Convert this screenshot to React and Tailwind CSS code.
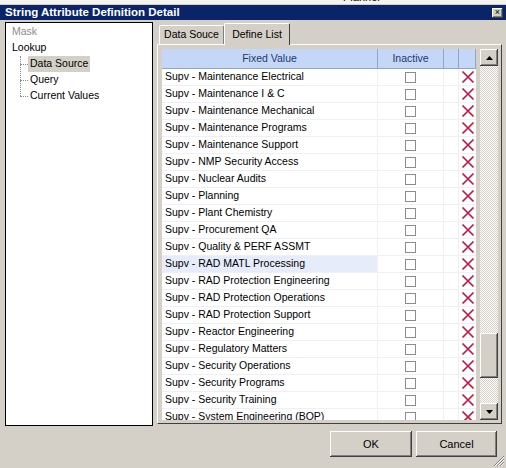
import React from 'react';

const rows = [
  'Supv - Maintenance Electrical',
  'Supv - Maintenance I & C',
  'Supv - Maintenance Mechanical',
  'Supv - Maintenance Programs',
  'Supv - Maintenance Support',
  'Supv - NMP Security Access',
  'Supv - Nuclear Audits',
  'Supv - Planning',
  'Supv - Plant Chemistry',
  'Supv - Procurement QA',
  'Supv - Quality & PERF ASSMT',
  'Supv - RAD MATL Processing',
  'Supv - RAD Protection Engineering',
  'Supv - RAD Protection Operations',
  'Supv - RAD Protection Support',
  'Supv - Reactor Engineering',
  'Supv - Regulatory Matters',
  'Supv - Security Operations',
  'Supv - Security Programs',
  'Supv - Security Training',
  'Supv - System Engineering (BOP)',
];

const raised =
  'shadow-[inset_-1px_-1px_#404040,inset_1px_1px_#ffffff,inset_-2px_-2px_#808080,inset_2px_2px_#d4d0c8]';

const RedX = () => (
  <svg width="14" height="14" viewBox="0 0 14 14">
    <path d="M1.5 1.5 L12.5 12.5 M12.5 1.5 L1.5 12.5" stroke="#c41840" strokeWidth="1.7" />
  </svg>
);

const Arrow = ({ down }) => (
  <svg width="7" height="4" viewBox="0 0 7 4">
    <path d={down ? 'M0 0 H7 L3.5 4 Z' : 'M0 4 H7 L3.5 0 Z'} fill="#000" />
  </svg>
);

const App = () => {
  return (
    <div className="w-[506px] h-[468px] bg-[#d4d0c8] overflow-hidden font-['Liberation_Sans',Arial,sans-serif] text-[10.5px] text-black relative">
      {/* bit of the window behind */}
      <div className="h-[5px] bg-[#f4f3ee] overflow-hidden border-b border-[#d4d0c8]">
        <div className="ml-[343px] -mt-[8px] text-[11px] leading-[11px]">Planner</div>
      </div>

      {/* title bar */}
      <div className="h-[15px] bg-[#0a246a] flex items-center justify-between pl-[5px] pr-[3px]">
        <span className="text-white font-bold text-[11.5px] leading-none">String Attribute Definition Detail</span>
        <div className={`w-[11px] h-[10px] bg-[#d4d0c8] ${raised} flex items-center justify-center text-[9px] leading-none`}>
          ×
        </div>
      </div>

      <div className="flex pl-[5px] pt-[2px] gap-[4px]">
        {/* tree */}
        <div className="w-[148px] h-[404px] bg-white border border-black pt-[1px]">
          <div className="h-[16px] flex items-center pl-[6px] text-[#8c8c8c]">Mask</div>
          <div className="h-[16px] flex items-center pl-[6px]">Lookup</div>
          <div className="relative">
            <div className="absolute left-[14px] top-0 h-[40px] border-l border-dotted border-[#8c8c8c]"></div>
            {['Data Source', 'Query', 'Current Values'].map((t, i) => (
              <div key={t} className="h-[16px] flex items-center pl-[14px]">
                <span className="w-[8px] border-t border-dotted border-[#8c8c8c]"></span>
                <span className={`px-[2px] ${i === 0 ? 'bg-[#d4d0c8]' : ''}`}>{t}</span>
              </div>
            ))}
          </div>
        </div>

        {/* tab control */}
        <div className="w-[345px]">
          <div className="h-[22px] flex items-end pl-[2px]">
            <div className="h-[19px] w-[65px] border-t border-l border-white border-r border-r-[#808080] rounded-t-[2px] flex items-center justify-center">
              Data Souce
            </div>
            <div className="h-[22px] w-[66px] bg-[#d4d0c8] border-t border-l border-white border-r border-r-[#404040] rounded-t-[2px] flex items-center justify-center relative z-10 -mb-[1px]">
              Define List
            </div>
          </div>
          <div className="h-[380px] border-t border-l border-white border-r border-r-[#404040] border-b border-b-[#404040] flex pl-[4px] pt-[4px] gap-[2px]">
            {/* grid */}
            <div className="w-[314px] h-[371px] bg-white overflow-hidden">
              <div className="flex h-[20px] bg-[#c5d7f6] text-[#1b3770] border-b border-[#8ea6cc]">
                <div className="w-[216px] flex items-center justify-center border-r border-[#8ea6cc]">Fixed Value</div>
                <div className="w-[66px] flex items-center justify-center border-r border-[#8ea6cc]">Inactive</div>
                <div className="w-[15px] border-r border-[#8ea6cc]"></div>
                <div className="w-[17px] border-r border-[#8ea6cc]"></div>
              </div>
              {rows.map((r, i) => (
                <div key={r} className="flex h-[17px] border-b border-[#eef0f4]">
                  <div className={`w-[216px] flex items-center pl-[3px] border-r border-[#eef0f4] whitespace-nowrap ${i === 11 ? 'bg-[#e6ecf9]' : ''}`}>
                    {r}
                  </div>
                  <div className="w-[66px] flex items-center justify-center border-r border-[#eef0f4]">
                    <div className="w-[11px] h-[11px] border border-[#8c8c8c] bg-white"></div>
                  </div>
                  <div className="w-[15px] border-r border-[#eef0f4]"></div>
                  <div className="w-[17px] flex items-center justify-center">
                    <RedX />
                  </div>
                </div>
              ))}
            </div>

            {/* scrollbar */}
            <div className="w-[18px] h-[371px] flex flex-col bg-[repeating-conic-gradient(#d4d0c8_0%_25%,#ffffff_0%_50%)] bg-[length:2px_2px] ml-[2px]">
              <div className={`h-[17px] bg-[#d4d0c8] ${raised} flex items-center justify-center`}>
                <Arrow />
              </div>
              <div className="h-[267px]"></div>
              <div className={`h-[45px] bg-[#d4d0c8] ${raised}`}></div>
              <div className="flex-1"></div>
              <div className={`h-[17px] bg-[#d4d0c8] ${raised} flex items-center justify-center`}>
                <Arrow down />
              </div>
            </div>
          </div>
        </div>
      </div>

      {/* buttons */}
      <div className="flex justify-end gap-[4px] pr-[9px] mt-[5px]">
        <button className={`w-[82px] h-[26px] bg-[#d4d0c8] ${raised} text-[11px]`}>OK</button>
        <button className={`w-[81px] h-[26px] bg-[#d4d0c8] ${raised} text-[11px]`}>Cancel</button>
      </div>

      {/* size grip */}
      <svg className="absolute right-[1px] bottom-[1px]" width="12" height="12" viewBox="0 0 12 12">
        <path d="M11 1 L1 11 M11 4 L4 11 M11 7 L7 11" stroke="#808080" strokeWidth="1" />
        <path d="M11 2 L2 11 M11 5 L5 11 M11 8 L8 11" stroke="#ffffff" strokeWidth="1" />
      </svg>
    </div>
  );
};

export default App;
